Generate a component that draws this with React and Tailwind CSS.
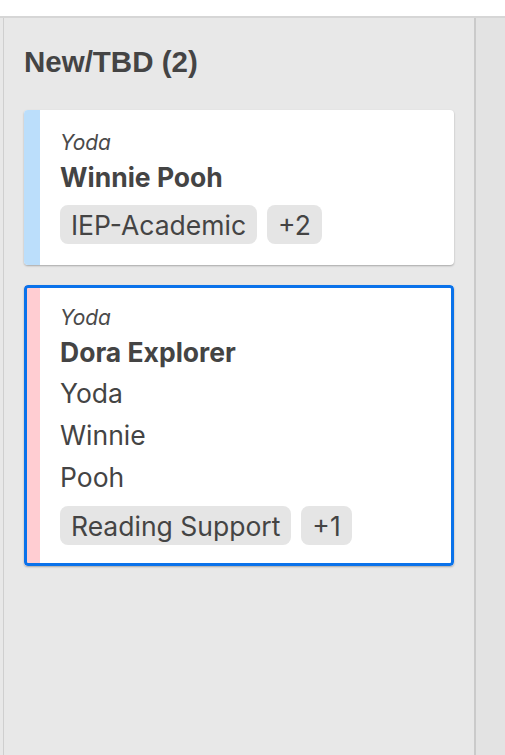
import React from 'react';

const cards = [
  {
    id: 1,
    owner: 'Yoda',
    name: 'Winnie Pooh',
    lines: [],
    tags: ['IEP-Academic', '+2'],
    stripe: 'bg-[#bbdefb]',
    selected: false,
  },
  {
    id: 2,
    owner: 'Yoda',
    name: 'Dora Explorer',
    lines: ['Yoda', 'Winnie', 'Pooh'],
    tags: ['Reading Support', '+1'],
    stripe: 'bg-[#ffcdd2]',
    selected: true,
  },
];

const Card = ({ card }) => (
  <div className="relative flex rounded-[4px] bg-white overflow-hidden shadow-[0_1px_2px_rgba(0,0,0,0.28)]">
    {/* Stripe */}
    <div className={`w-4 shrink-0 ${card.stripe}`} />

    <div className="flex-1 pl-5 pr-4 pt-[19px] pb-[21px] text-[#444444] font-['Inter',sans-serif]">
      <div className="italic text-[21px] leading-[28px] text-[#4a4a4a]">{card.owner}</div>
      <div className="font-bold text-[26.5px] leading-[40px]">{card.name}</div>
      {card.lines.map((l) => (
        <div key={l} className="text-[26.5px] leading-[42px]">{l}</div>
      ))}
      <div className="mt-2 flex gap-[10px]">
        {card.tags.map((t) => (
          <span
            key={t}
            className="rounded-[8px] bg-[#e5e5e5] px-[11px] pt-[5px] pb-[3px] text-[26.5px] leading-[31px]"
          >
            {t}
          </span>
        ))}
      </div>
    </div>

    {/* Selection ring */}
    {card.selected && (
      <div className="pointer-events-none absolute inset-0 rounded-[4px] border-[3px] border-[#0a72ea]" />
    )}
  </div>
);

export default function App() {
  return (
    <div className="w-[505px] h-[755px] overflow-hidden bg-white flex flex-col">
      <div className="h-4 shrink-0 bg-white" />
      <div className="flex-1 flex border-t-2 border-[#d6d6d6] bg-[#e3e3e3]">
        <div className="w-[3px] shrink-0 bg-[#e8e8e8]" />
        {/* Column */}
        <div className="w-[473px] shrink-0 bg-[#e8e8e8] border-l border-r-2 border-l-[#cfcfcf] border-r-[#cacaca] px-5">
          <h2 className="pt-[27px] text-[29.5px] leading-[34px] font-bold text-[#444444] font-['Liberation_Sans',Arial,sans-serif]">
            New/TBD (2)
          </h2>
          <div className="mt-[31px] flex flex-col gap-5">
            {cards.map((c) => (
              <Card key={c.id} card={c} />
            ))}
          </div>
        </div>
        <div className="flex-1 bg-[#e3e3e3]" />
      </div>
    </div>
  );
}
